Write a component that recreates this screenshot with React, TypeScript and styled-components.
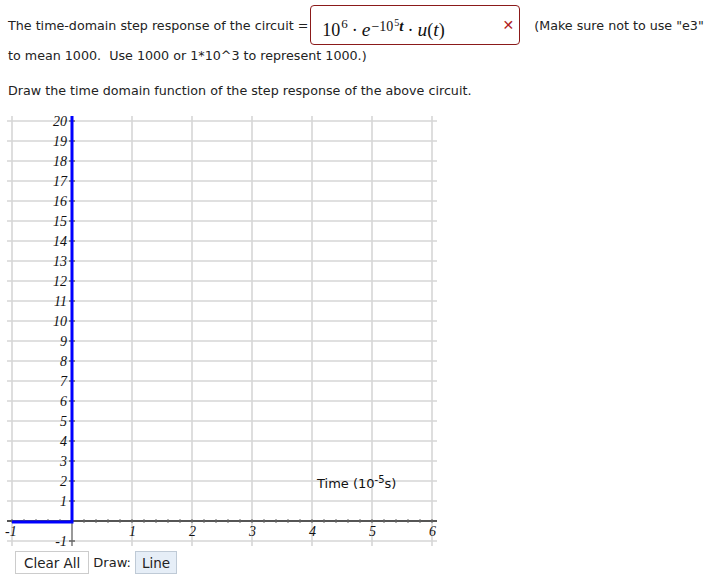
import React from "react";
import styled, { createGlobalStyle } from "styled-components";

const GlobalStyle = createGlobalStyle`
  html, body {
    margin: 0;
    padding: 0;
    background: #ffffff;
  }
  body {
    padding: 0 8px;
    font-family: Tahoma, "DejaVu Sans", "Liberation Sans", sans-serif;
    font-size: 12.7px;
    color: #222;
  }
`;

const Page = styled.div`
  display: flex;
  flex-direction: column;
  width: 709px;
`;

const Question = styled.div`
  padding-top: 5px;
`;

const FirstLine = styled.div`
  display: flex;
  align-items: center;
  height: 40px;
  white-space: nowrap;
`;

const SecondLine = styled.div`
  margin-top: 1px;
  line-height: 20px;
`;

const AnswerBox = styled.div`
  box-sizing: border-box;
  width: 210px;
  height: 40px;
  margin: 0 14px 0 2px;
  border: 1px solid #8b1a1a;
  border-radius: 4px;
  display: flex;
  align-items: center;
  justify-content: space-between;
  padding: 0 5px 0 11px;
`;

const MathText = styled.span`
  font-family: "Liberation Serif", "DejaVu Serif", serif;
  font-size: 18px;
  color: #111;
  padding-top: 8px;
  white-space: nowrap;
`;

const Mi = styled.i<{ $bold?: boolean }>`
  font-style: italic;
  font-weight: ${(p) => (p.$bold ? 700 : 400)};
  font-size: 1.08em;
`;

const Raised = styled.span<{ $size: number; $lift: number }>`
  display: inline-block;
  font-size: ${(p) => p.$size}px;
  vertical-align: ${(p) => p.$lift}px;
  line-height: 1;
  margin-left: 1px;
`;

const Dot = styled.span`
  margin: 0 4px;
`;

const Cross = styled.span`
  color: #b02020;
  font-weight: bold;
  font-size: 14px;
  font-family: "DejaVu Sans", sans-serif;
`;

const Instruction = styled.p`
  margin: 16px 0 0;
  line-height: 18px;
`;

const Board = styled.svg`
  display: block;
  overflow: visible;
  margin: 16px 0 0 -1px;
`;

const Controls = styled.div`
  display: flex;
  align-items: center;
  gap: 4px;
  margin: 5px 0 0 7px;
`;

const Button = styled.button<{ $active?: boolean }>`
  font-family: inherit;
  font-size: 13.5px;
  color: #222;
  height: 23px;
  padding: 0 ${(p) => (p.$active ? 6 : 8)}px;
  border: 1px solid ${(p) => (p.$active ? "#bfcad6" : "#cccccc")};
  background: ${(p) => (p.$active ? "#e6eef7" : "#ffffff")};
  border-radius: 0;
`;

const Label = styled.span`
  font-size: 13px;
`;

const X0 = 5;
const Y0 = 5;
const px = (v: number) => X0 + (v + 1) * 60;
const py = (v: number) => Y0 + (20 - v) * 20;

const xs = [-1, 0, 1, 2, 3, 4, 5, 6];
const ys = Array.from({ length: 22 }, (_, i) => i - 1);
const minor = Array.from({ length: 36 }, (_, i) => -1 + i * 0.2);

function Graph() {
  return (
    <Board width={430} height={430} viewBox="0 0 430 430">
      {xs.map((v) => (
        <line key={"gx" + v} x1={px(v)} x2={px(v)} y1={0} y2={430} stroke="#d6d6d6" strokeWidth={1.6} />
      ))}
      {ys.map((v) => (
        <line key={"gy" + v} x1={0} x2={430} y1={py(v)} y2={py(v)} stroke="#d6d6d6" strokeWidth={1.6} />
      ))}
      <line x1={0} x2={430} y1={py(0)} y2={py(0)} stroke="#555" strokeWidth={2} />
      {minor.map((v, i) => (
        <line key={"mt" + i} x1={px(v)} x2={px(v)} y1={py(0) - 2} y2={py(0) + 2} stroke="#666" strokeWidth={1} />
      ))}
      <line x1={px(0)} x2={px(0)} y1={0} y2={430} stroke="#999" strokeWidth={2} />
      {ys.filter((v) => v !== 0).map((v) => (
        <g key={"yt" + v}>
          <line x1={px(0) - 3} x2={px(0) + 3} y1={py(v)} y2={py(v)} stroke="#666" strokeWidth={1.5} />
          <text
            x={px(0) - 5}
            y={py(v) + 5}
            textAnchor="end"
            fontFamily="Liberation Serif, serif"
            fontStyle="italic"
            fontSize={14}
            fill="#111"
          >
            {v}
          </text>
        </g>
      ))}
      {xs.filter((v) => v !== 0).map((v) => (
        <text
          key={"xl" + v}
          x={v === -1 ? px(v) - 7 : px(v) - 3}
          y={py(0) + 15}
          fontFamily="Liberation Serif, serif"
          fontStyle="italic"
          fontSize={14}
          fill="#111"
        >
          {v}
        </text>
      ))}
      <text x={310} y={372} fontFamily="Tahoma, DejaVu Sans, Liberation Sans, sans-serif" fontSize={13} fill="#111">
        Time (10
        <tspan dy={-5} fontSize={10}>-5</tspan>
        <tspan dy={5}>s)</tspan>
      </text>
      <polyline
        points={`${px(-1)},${py(0) + 1} ${px(0)},${py(0) + 1} ${px(0)},0`}
        fill="none"
        stroke="#0000ff"
        strokeWidth={3}
      />
    </Board>
  );
}

export default function App() {
  return (
    <Page>
      <GlobalStyle />
      <Question>
        <FirstLine>
          <span>The time-domain step response of the circuit =</span>
          <AnswerBox>
            <MathText>
              10
              <Raised $size={13} $lift={8}>6</Raised>
              <Dot>·</Dot>
              <Mi>e</Mi>
              <Raised $size={14} $lift={5}>
                −10
                <Raised $size={10} $lift={5}>5</Raised>
                <Mi $bold>t</Mi>
              </Raised>
              <Dot>·</Dot>
              <Mi>u</Mi>(<Mi>t</Mi>)
            </MathText>
            <Cross>✕</Cross>
          </AnswerBox>
          <span>(Make sure not to use "e3"</span>
        </FirstLine>
        <SecondLine>to mean 1000.&nbsp; Use 1000 or 1*10^3 to represent 1000.)</SecondLine>
      </Question>
      <Instruction>Draw the time domain function of the step response of the above circuit.</Instruction>
      <Graph />
      <Controls>
        <Button>Clear All</Button>
        <Label>Draw:</Label>
        <Button $active>Line</Button>
      </Controls>
    </Page>
  );
}
